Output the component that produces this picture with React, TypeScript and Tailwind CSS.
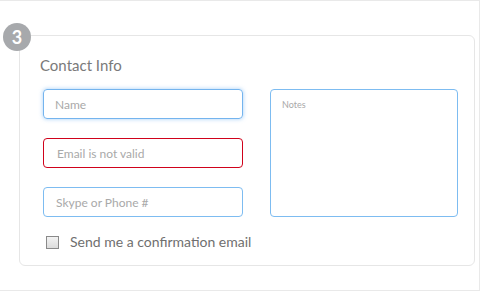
import React from "react";

export default function App() {
  return (
    <div className="w-[480px] h-[291px] bg-white border-t border-r border-b border-[#e9e9e9] font-['Lato','Noto_Sans',sans-serif] overflow-hidden">
      <div className="relative ml-[19px] mt-[34px] w-[456px] h-[231px] rounded-[6px] border border-[#e6e6e6] bg-white">
        <div className="absolute -left-[17px] -top-[13px] w-[28px] h-[28px] rounded-full bg-[#a7a9ac] flex items-center justify-center text-white text-[18px] font-bold leading-none">
          3
        </div>
        <div className="pl-[20px] pt-[20px] text-[15px] leading-[18px] text-[#7a7a7a]">Contact Info</div>
        <div className="flex pl-[23px] pt-[15px] gap-[27px]">
          <div className="flex flex-col gap-[19px] w-[200px]">
            <input
              placeholder="Name"
              className="h-[30px] w-full rounded-[4px] border border-[#74b4ee] shadow-[0_0_4px_rgba(90,165,240,0.55)] px-[11px] text-[12px] text-[#555] placeholder:text-[#a9a9a9] outline-none"
            />
            <input
              placeholder="Email is not valid"
              className="h-[30px] w-full rounded-[4px] border border-[#d0021b] px-[13px] text-[12px] text-[#555] placeholder:text-[#a9a9a9] outline-none"
            />
            <input
              placeholder="Skype or Phone #"
              className="h-[30px] w-full rounded-[4px] border border-[#7dbcf1] px-[12px] text-[12px] text-[#555] placeholder:text-[#a9a9a9] outline-none"
            />
          </div>
          <textarea
            placeholder="Notes"
            className="w-[188px] h-[128px] rounded-[4px] border border-[#7dbcf1] px-[11px] py-[8px] text-[9px] text-[#555] placeholder:text-[#a9a9a9] outline-none resize-none"
          />
        </div>
        <label className="flex items-center pl-[26px] pt-[17px] gap-[11px] text-[14px] leading-[16px] text-[#6f6f6f]">
          <span className="w-[13px] h-[13px] border border-[#8a8a8a] bg-gradient-to-b from-[#f3f3f3] to-[#dcdcdc]" />
          Send me a confirmation email
        </label>
      </div>
    </div>
  );
}
